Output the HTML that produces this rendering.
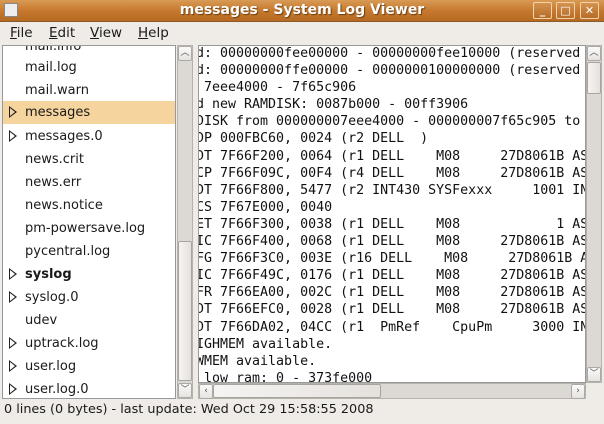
<!DOCTYPE html>
<html><head><meta charset="utf-8"><style>
*{margin:0;padding:0;box-sizing:border-box}
body{width:604px;height:424px;overflow:hidden;background:#efebe7;font-family:"DejaVu Sans","Liberation Sans",sans-serif;font-size:13px;color:#1a1a1a;position:relative}
.title{position:absolute;left:0;top:0;width:604px;height:22px;background:linear-gradient(#d89a55,#c77a2e 50%,#b56a22);border-bottom:1px solid #8a5a2a}
.title .t{position:absolute;left:0;width:604px;top:2px;text-align:center;color:#fff;font-weight:bold;font-size:14px;text-shadow:1px 1px 1px #6a3f10}
.btn{position:absolute;top:2px;width:19px;height:17px;border:1px solid #f3d2a8;border-radius:2px;background:linear-gradient(#d49250,#b66d27);color:#fff;font-size:11px;text-align:center;line-height:15px;font-weight:bold}
.ico{position:absolute;left:4px;top:3px;width:14px;height:14px;background:#eee;border:1px solid #888}
.menu{position:absolute;top:22px;left:0;width:604px;height:22px}
.menu span{position:absolute;top:3px;font-size:13.5px}
.menu u{text-decoration:underline}
.left{position:absolute;left:2px;top:45px;width:174px;height:354px;background:#fff;border:1px solid #999;overflow:hidden}
.row{position:absolute;left:0;width:172px;height:23px;line-height:23px;padding-left:22px;font-size:13px}
.row.sel{background:#f5d49d}
.tri{position:absolute;left:6px;top:5px;width:0;height:0;border-top:6px solid transparent;border-bottom:6px solid transparent;border-left:8px solid #222}
.tri::after{content:"";position:absolute;left:-7px;top:-4px;border-top:4px solid transparent;border-bottom:4px solid transparent;border-left:5px solid #fff}
.sel .tri::after{border-left-color:#f5d49d}
.vs{position:absolute;width:16px;background:#dcd8d3;border:1px solid #b5b1ab}
.arr{position:absolute;width:14px;height:15px;background:linear-gradient(#fbfaf9,#e6e3df);border:1px solid #aaa;border-radius:2px;font-size:9px;text-align:center;line-height:13px;color:#555}
.thumb{position:absolute;background:linear-gradient(90deg,#f6f4f2,#e4e1dd);border:1px solid #a8a49e;border-radius:2px}
.right{position:absolute;left:198px;top:45px;width:388px;height:338px;background:#fff;border:1px solid #999;overflow:hidden}
.log{position:absolute;left:-3px;top:-1px;font-family:"DejaVu Sans Mono","Liberation Mono",monospace;font-size:13.3px;line-height:17.1px;white-space:pre;color:#111}
.status{position:absolute;left:4px;top:402px;font-size:12.8px}
</style></head><body>
<div class="title"><div class="ico"></div><div class="t">messages - System Log Viewer</div>
<div class="btn" style="left:533px">_</div><div class="btn" style="left:556px">□</div><div class="btn" style="left:580px">✕</div></div>
<div class="menu"><span style="left:10px"><u>F</u>ile</span><span style="left:49px"><u>E</u>dit</span><span style="left:90px"><u>V</u>iew</span><span style="left:138px"><u>H</u>elp</span></div>
<div class="left">
<div class="row" style="top:-11px">mail.info</div>
<div class="row" style="top:10px">mail.log</div>
<div class="row" style="top:33px">mail.warn</div>
<div class="row sel" style="top:55px"><i class="tri"></i>messages</div>
<div class="row" style="top:79px"><i class="tri"></i>messages.0</div>
<div class="row" style="top:102px">news.crit</div>
<div class="row" style="top:125px">news.err</div>
<div class="row" style="top:148px">news.notice</div>
<div class="row" style="top:171px">pm-powersave.log</div>
<div class="row" style="top:194px">pycentral.log</div>
<div class="row" style="top:217px;font-weight:bold"><i class="tri"></i>syslog</div>
<div class="row" style="top:240px"><i class="tri"></i>syslog.0</div>
<div class="row" style="top:263px">udev</div>
<div class="row" style="top:286px"><i class="tri"></i>uptrack.log</div>
<div class="row" style="top:309px"><i class="tri"></i>user.log</div>
<div class="row" style="top:332px"><i class="tri"></i>user.log.0</div>
</div>
<div class="vs" style="left:177px;top:45px;height:354px">
<div class="arr" style="left:0;top:0">︿</div>
<div class="thumb" style="left:0;top:195px;width:14px;height:140px"></div>
<div class="arr" style="left:0;bottom:0">﹀</div></div>
<div class="right"><div class="log">d: 00000000fee00000 - 00000000fee10000 (reserved
d: 00000000ffe00000 - 0000000100000000 (reserved
 7eee4000 - 7f65c906
d new RAMDISK: 0087b000 - 00ff3906
DISK from 000000007eee4000 - 000000007f65c905 to
DP 000FBC60, 0024 (r2 DELL  )
DT 7F66F200, 0064 (r1 DELL    M08     27D8061B AS
CP 7F66F09C, 00F4 (r4 DELL    M08     27D8061B AS
DT 7F66F800, 5477 (r2 INT430 SYSFexxx     1001 IN
CS 7F67E000, 0040
ET 7F66F300, 0038 (r1 DELL    M08            1 AS
IC 7F66F400, 0068 (r1 DELL    M08     27D8061B AS
FG 7F66F3C0, 003E (r16 DELL    M08     27D8061B A
IC 7F66F49C, 0176 (r1 DELL    M08     27D8061B AS
FR 7F66EA00, 002C (r1 DELL    M08     27D8061B AS
DT 7F66EFC0, 0028 (r1 DELL    M08     27D8061B AS
DT 7F66DA02, 04CC (r1  PmRef    CpuPm     3000 IN
IGHMEM available.
WMEM available.
 low ram: 0 - 373fe000</div></div>
<div class="vs" style="left:586px;top:45px;height:338px">
<div class="arr" style="left:0;top:0">︿</div>
<div class="thumb" style="left:0;top:16px;width:14px;height:32px"></div>
<div class="arr" style="left:0;bottom:0">﹀</div></div>
<div class="vs" style="left:198px;top:383px;width:388px;height:16px">
<div class="arr" style="left:0;top:0">‹</div>
<div class="thumb" style="left:14px;top:0;width:168px;height:14px"></div>
<div class="arr" style="right:0;top:0">›</div></div>
<div class="status">0 lines (0 bytes) - last update: Wed Oct 29 15:58:55 2008</div>
</body></html>
